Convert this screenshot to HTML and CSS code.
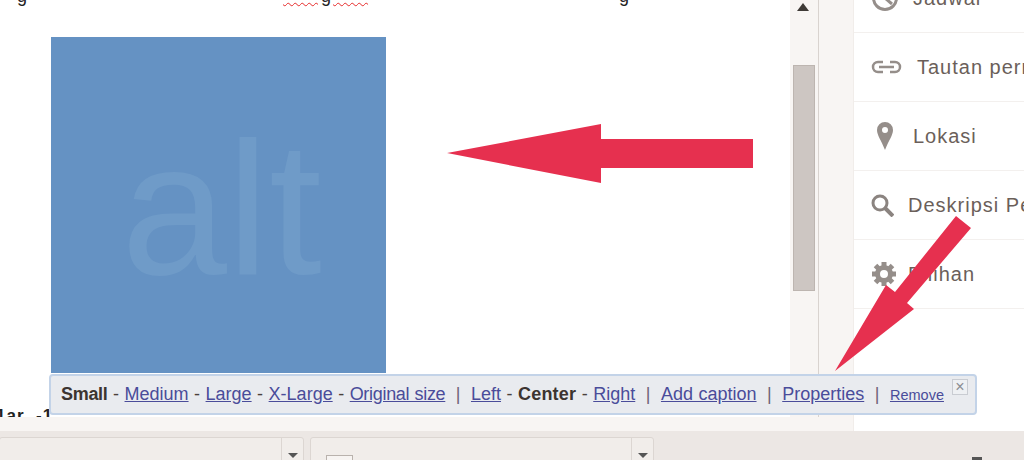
FILE: index.html
```html
<!DOCTYPE html>
<html lang="id">
<head>
<meta charset="utf-8">
<title>Editor</title>
<link rel="stylesheet" href="styles.css">
</head>
<body>
<div class="page">
  <div class="main">
    <div class="left">
      <div class="work">
        <div class="editor">
          <div class="cut-line"><span class="g1">g</span><span class="typo">gmb</span><span class="g3">g</span><span class="typo">gmb</span><span class="g2">g</span></div>
          <div class="picture"><span class="alt">alt</span></div>
          <div class="after">1ar  -1</div>
        </div>
        <div class="scroll">
          <svg class="up" width="12" height="8" viewBox="0 0 12 8"><path d="M6 0 12 8H0z"/></svg>
          <div class="thumb"></div>
        </div>
      </div>
    </div>
    <div class="side">
      <div class="row">
        <svg class="ic clock" width="26" height="26" viewBox="0 0 26 26"><circle cx="13" cy="13" r="11.500"/><path d="M13 13 20 19"/></svg>
        <span class="lbl">Jadwal</span>
      </div>
      <div class="row">
        <svg class="ic link" width="31" height="14" viewBox="0 0 31 14"><path d="M12 2H7a5 5 0 0 0 0 10h5M19 2h5a5 5 0 0 1 0 10h-5M8 7h15"/></svg>
        <span class="lbl">Tautan permalink</span>
      </div>
      <div class="row">
        <svg class="pin" width="16" height="28" viewBox="0 0 16 28"><path fill-rule="evenodd" d="M8 0a8 8 0 0 1 8 8c0 5-4 10-8 20C4 18 0 13 0 8a8 8 0 0 1 8-8zm0 5a3 3 0 1 0 0 6 3 3 0 0 0 0-6z"/></svg>
        <span class="lbl">Lokasi</span>
      </div>
      <div class="row">
        <svg class="ic search" width="23" height="23" viewBox="0 0 23 23"><circle cx="9" cy="9" r="7"/><path class="thick" d="M14 14 22 22"/></svg>
        <span class="lbl">Deskripsi Penelusuran</span>
      </div>
      <div class="row">
        <svg class="gear" width="26" height="26" viewBox="0 0 26 26"><g class="teeth"><path d="M13 1v24M1 13h24M4.500 4.500l17 17M21.500 4.500l-17 17"/></g><circle class="hub" cx="13" cy="13" r="6.500"/></svg>
        <span class="lbl">Pilihan</span>
      </div>
    </div>
  </div>
  <div class="bottom">
    <div class="sel sel-a"><span class="caret"></span></div>
    <div class="sel sel-b"><span class="thumbbox"></span><span class="caret"></span></div>
    <span class="handle"></span>
  </div>

  <div class="bubble">
    <b class="narrow">Small</b> - <a href="#">Medium</a> - <a href="#">Large</a> - <a href="#">X-Large</a> - <a class="tight" href="#">Original size</a><span class="sep">|</span><a href="#">Left</a> - <b class="wide">Center</b> - <a href="#">Right</a><span class="sep">|</span><a href="#">Add caption</a><span class="sep">|</span><a href="#">Properties</a><span class="sep">|</span><a class="small" href="#">Remove</a>
    <span class="close">×</span>
  </div>

  <svg class="arrows" width="1024" height="460" viewBox="0 0 1024 460">
    <path d="M447 153 601 124V139H753V168H601V183Z"/>
    <path d="M956 216 971 228 907 303 914 309 835 371 886 285 895 292Z"/>
  </svg>
</div>
</body>
</html>
```
FILE: styles.css
```css
* { box-sizing: border-box; }
html, body { margin: 0; padding: 0; }
body { font-family: "Liberation Sans", Arial, sans-serif; background: #fff; overflow: hidden; }
.page { position: relative; width: 1024px; height: 460px; overflow: hidden; display: flex; flex-direction: column; }

.main { display: flex; flex: none; height: 431px; }
.left { flex: none; width: 854px; background: #f8f5f3; border-right: 1px solid #f1edea; }
.work { display: flex; height: 417px; }
.editor { flex: none; width: 790px; height: 417px; background: #fff; overflow: hidden; }

.cut-line { height: 37px; margin-top: -13px; margin-bottom: 13px; font-size: 18px; line-height: 18px; color: #222; display: flex; white-space: pre; }
.g1 { margin-left: 17px; width: 266px; }
.typo { text-decoration: underline wavy #e62b2b 1px; text-decoration-skip-ink: none; text-underline-offset: 0; color: transparent; }
.g3 { margin: 0 2px 0 3px; }
.g2 { margin-left: 251px; }

.picture { width: 335px; height: 336px; margin-left: 51px; background: #6592c3; display: flex; align-items: center; justify-content: center; padding-left: 6px; padding-top: 6px; }
.alt { font-size: 190px; line-height: 1; color: #6f9bc8; }
.after { margin: 33px 0 0 -4px; font-size: 17px; line-height: 20px; font-weight: bold; color: #222; white-space: pre; letter-spacing: 1px; }

.scroll { flex: none; width: 29px; height: 417px; border-right: 1px solid #d9d3cf; padding: 65px 3px 0; position: relative; }
.up { position: absolute; left: 7px; top: 3px; fill: #3f3a36; }
.thumb { width: 22px; height: 226px; background: #cdc6c2; border: 1px solid #bdb5b0; }

.side { flex: 1; min-width: 0; overflow: hidden; margin-top: -36px; background: #fff; }
.row { height: 69px; border-bottom: 1px solid #f3f0ee; display: flex; align-items: center; padding-left: 17px; }
.ic { fill: none; stroke: #958e8a; stroke-width: 3; flex: none; }
.lbl { font-size: 20px; letter-spacing: 1px; color: #6b5f5a; white-space: nowrap; }
.clock { margin: 0 15px 0 1px; }
.link { margin-right: 15px; stroke-width: 2.5; }
.pin { margin: 0 20px 0 6px; fill: #958e8a; flex: none; }
.search { margin-right: 14px; stroke: #8b8480; }
.search .thick { stroke-width: 4; }
.gear { margin-right: 11px; flex: none; }
.teeth { stroke: #958e8a; stroke-width: 5; fill: none; }
.hub { fill: #fff; stroke: #958e8a; stroke-width: 5; }

.bottom { flex: 1; min-height: 0; background: #ece7e4; display: flex; gap: 6px; padding-top: 6px; position: relative; overflow: hidden; }
.sel { flex: none; height: 30px; background: #f1edea; border: 1px solid #dcd6d2; border-radius: 3px 3px 0 0; position: relative; }
.sel-a { width: 305px; margin-left: -1px; }
.sel-b { width: 344px; }
.caret { position: absolute; right: 0; top: 0; width: 22px; height: 30px; border-left: 1px solid #dcd6d2; }
.caret::after { content: ""; position: absolute; left: 6px; top: 15px; border: 5px solid transparent; border-top: 5px solid #555; }
.thumbbox { position: absolute; left: 15px; top: 17px; width: 27px; height: 12px; background: #f7f4f2; border: 1px solid #b9b2ad; }
.handle { position: absolute; left: 972px; top: 26px; width: 10px; height: 3px; background: #555; }

.bubble { position: absolute; left: 49px; top: 374px; width: 928px; height: 41px; padding: 8px 0 0 10px; background: #e9ebef; border: 2px solid #c3d3e8; border-radius: 4px; font-size: 18px; line-height: 20px; word-spacing: 0.5px; color: #4a413c; white-space: nowrap; }
.bubble b { color: #3c3430; }
.bubble .narrow { letter-spacing: -0.3px; }
.bubble .wide { letter-spacing: 0.2px; }
.bubble a { color: #4a4c9a; }
.bubble .tight { letter-spacing: -0.3px; }
.bubble .small { font-size: 14.500px; }
.sep { margin: 0 10.500px; color: #6f5f78; }
.close { position: absolute; left: 901px; top: 3px; width: 16px; height: 16px; border: 1px solid #c9ccd2; background: #eef0f3; color: #8a8d92; font-size: 16px; line-height: 13px; text-align: center; }

.arrows { position: absolute; left: 0; top: 0; fill: #e6304f; pointer-events: none; }
```
